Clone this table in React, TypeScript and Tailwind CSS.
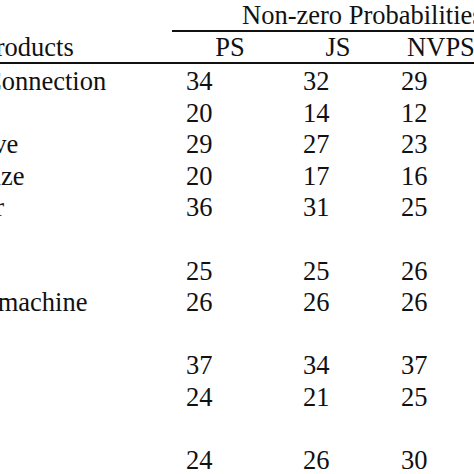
const rows: { label: string; shift: string; ps: string; js: string; nvps: string }[] = [
  { label: "Connection", shift: "ml-[-16px]", ps: "34", js: "32", nvps: "29" },
  { label: "", shift: "", ps: "20", js: "14", nvps: "12" },
  { label: "Drive", shift: "ml-[-42px]", ps: "29", js: "27", nvps: "23" },
  { label: "Size", shift: "ml-[-21px]", ps: "20", js: "17", nvps: "16" },
  { label: "Printer", shift: "ml-[-68px]", ps: "36", js: "31", nvps: "25" },
  { label: "", shift: "", ps: "", js: "", nvps: "" },
  { label: "", shift: "", ps: "25", js: "25", nvps: "26" },
  { label: "Washing machine", shift: "ml-[-101px]", ps: "26", js: "26", nvps: "26" },
  { label: "", shift: "", ps: "", js: "", nvps: "" },
  { label: "", shift: "", ps: "37", js: "34", nvps: "37" },
  { label: "", shift: "", ps: "24", js: "21", nvps: "25" },
  { label: "", shift: "", ps: "", js: "", nvps: "" },
  { label: "", shift: "", ps: "24", js: "26", nvps: "30" },
];

export default function App() {
  return (
    <div className="w-[474px] h-[474px] overflow-hidden bg-white text-[#111] font-['Liberation_Serif','Times_New_Roman',serif] text-[26.5px] leading-[31.6px]">
      {/* group header */}
      <div className="flex h-[32px]">
        <div className="w-[172px] shrink-0" />
        <div className="w-[420px] shrink-0 border-b-2 border-[#111] pl-[70px] whitespace-nowrap">
          Non-zero Probabilities
        </div>
      </div>

      {/* column header */}
      <div className="flex h-[32px] w-[600px] border-b-2 border-[#111] whitespace-nowrap">
        <div className="w-[172px] shrink-0">
          <span className="ml-[-19px]">Products</span>
        </div>
        <div className="w-[116px] shrink-0 text-center">PS</div>
        <div className="w-[100px] shrink-0 text-center">JS</div>
        <div className="w-[106px] shrink-0 text-center">NVPS</div>
      </div>

      <div className="mt-[2px]">
        {rows.map((r, i) => (
          <div key={i} className="flex h-[31.6px] whitespace-nowrap">
            <div className="w-[172px] shrink-0">
              {r.label && <span className={r.shift}>{r.label}</span>}
            </div>
            <div className="w-[116px] shrink-0 pl-[14px]">{r.ps}</div>
            <div className="w-[100px] shrink-0 pl-[15px]">{r.js}</div>
            <div className="w-[106px] shrink-0 pl-[13px]">{r.nvps}</div>
          </div>
        ))}
      </div>
    </div>
  );
}
